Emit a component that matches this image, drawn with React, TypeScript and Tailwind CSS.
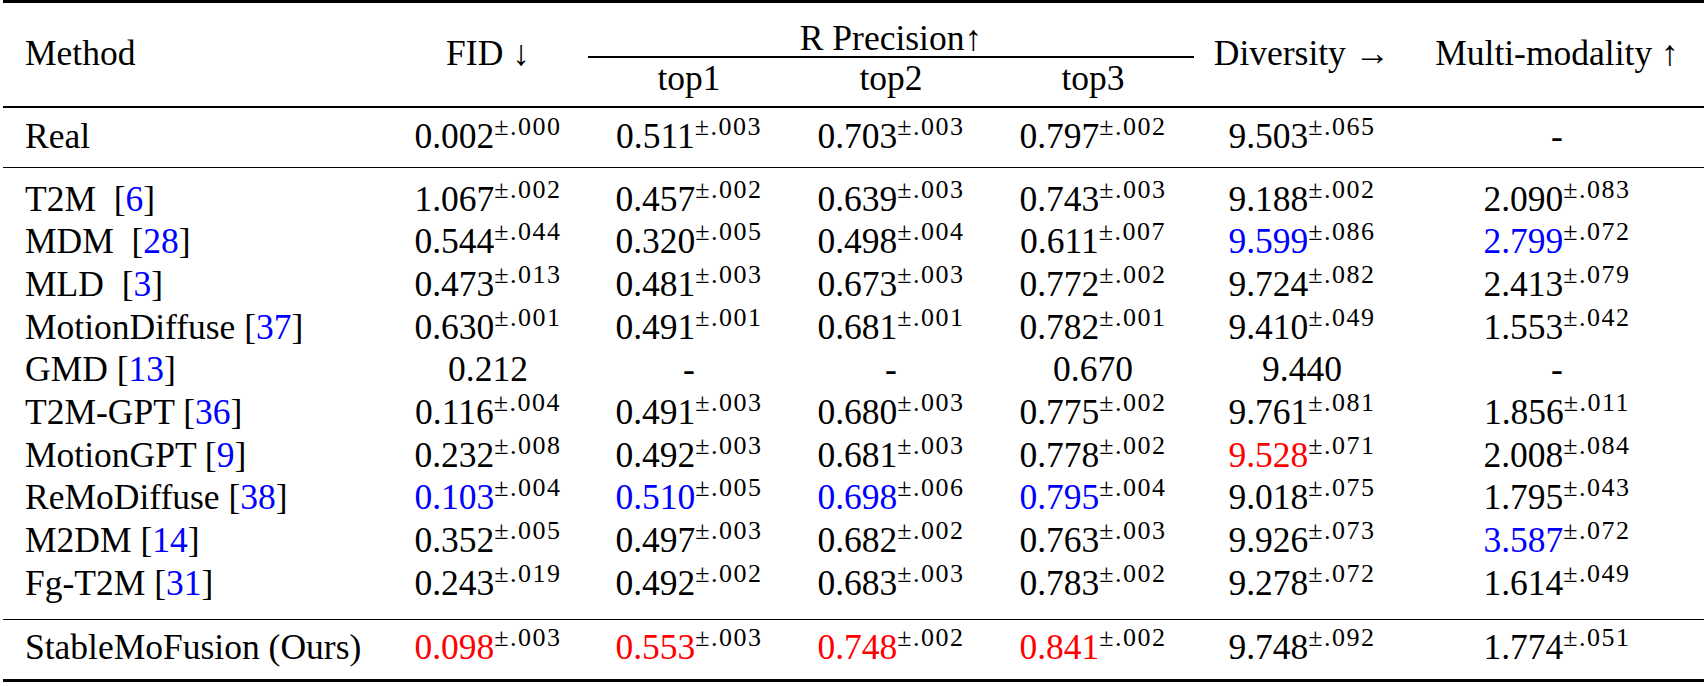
import React from "react";

type Cell = [string, string?, ("b" | "r")?];

type Row = { name: string; ref?: string; wide?: boolean; cells: Cell[] };

const cols = "grid grid-cols-[385px_200px_202px_202px_202px_216px_294px]";

const real: Cell[] = [
    ["0.002", ".000"], ["0.511", ".003"], ["0.703", ".003"], ["0.797", ".002"], ["9.503", ".065"], ["-"],
];

const rows: Row[] = [
    { name: "T2M", ref: "6", wide: true, cells: [["1.067", ".002"], ["0.457", ".002"], ["0.639", ".003"], ["0.743", ".003"], ["9.188", ".002"], ["2.090", ".083"]] },
    { name: "MDM", ref: "28", wide: true, cells: [["0.544", ".044"], ["0.320", ".005"], ["0.498", ".004"], ["0.611", ".007"], ["9.599", ".086", "b"], ["2.799", ".072", "b"]] },
    { name: "MLD", ref: "3", wide: true, cells: [["0.473", ".013"], ["0.481", ".003"], ["0.673", ".003"], ["0.772", ".002"], ["9.724", ".082"], ["2.413", ".079"]] },
    { name: "MotionDiffuse", ref: "37", cells: [["0.630", ".001"], ["0.491", ".001"], ["0.681", ".001"], ["0.782", ".001"], ["9.410", ".049"], ["1.553", ".042"]] },
    { name: "GMD", ref: "13", cells: [["0.212"], ["-"], ["-"], ["0.670"], ["9.440"], ["-"]] },
    { name: "T2M-GPT", ref: "36", cells: [["0.116", ".004"], ["0.491", ".003"], ["0.680", ".003"], ["0.775", ".002"], ["9.761", ".081"], ["1.856", ".011"]] },
    { name: "MotionGPT", ref: "9", cells: [["0.232", ".008"], ["0.492", ".003"], ["0.681", ".003"], ["0.778", ".002"], ["9.528", ".071", "r"], ["2.008", ".084"]] },
    { name: "ReMoDiffuse", ref: "38", cells: [["0.103", ".004", "b"], ["0.510", ".005", "b"], ["0.698", ".006", "b"], ["0.795", ".004", "b"], ["9.018", ".075"], ["1.795", ".043"]] },
    { name: "M2DM", ref: "14", cells: [["0.352", ".005"], ["0.497", ".003"], ["0.682", ".002"], ["0.763", ".003"], ["9.926", ".073"], ["3.587", ".072", "b"]] },
    { name: "Fg-T2M", ref: "31", cells: [["0.243", ".019"], ["0.492", ".002"], ["0.683", ".003"], ["0.783", ".002"], ["9.278", ".072"], ["1.614", ".049"]] },
];

const ours: Cell[] = [
    ["0.098", ".003", "r"], ["0.553", ".003", "r"], ["0.748", ".002", "r"], ["0.841", ".002", "r"], ["9.748", ".092"], ["1.774", ".051"],
];

function Value({ cell }: { cell: Cell }) {
    const [num, pm, color] = cell;
    const tone = color === "b" ? "text-[#0000ff]" : color === "r" ? "text-[#ff0000]" : "text-black";
    return (
        <div className="text-center whitespace-nowrap">
            <span className={ tone }>{ num }</span>
            { pm && <span className="relative -top-[13px] text-[26px] tracking-[1.5px]">±{ pm }</span> }
        </div>
    );
}

function DataRow({ name, refNo, wide, cells }: { name: string; refNo?: string; wide?: boolean; cells: Cell[] }) {
    return (
        <div className={ `${ cols } h-[42.7px] leading-[42.7px]` }>
            <div className="pl-[22px] whitespace-pre">
                { name }
                { refNo && (
                    <>
                        { wide ? "  [" : " [" }
                        <span className="text-[#0000ff]">{ refNo }</span>]
                    </>
                ) }
            </div>
            { cells.map((c, i) => <Value key={ i } cell={ c } />) }
        </div>
    );
}

export default function App() {
    return (
        <div className="w-[1707px] h-[686px] bg-white text-black font-['Liberation_Serif',serif] text-[35.5px]">
            <div className="ml-[3px] w-[1701px] flex flex-col">
                <div className="h-[3px] bg-black" />

                {/* header */ }
                <div className={ `${ cols } h-[103px] leading-[32px]` }>
                    <div className="pl-[22px] pt-[34px]">Method</div>
                    <div className="pt-[34px] text-center">FID ↓</div>
                    <div className="col-span-3 flex flex-col">
                        <div className="pt-[19px] h-[53px] text-center">R Precision↑</div>
                        <div className="h-[1.5px] bg-black" />
                        <div className="mt-[4px] grid grid-cols-3 text-center">
                            <div>top1</div>
                            <div>top2</div>
                            <div>top3</div>
                        </div>
                    </div>
                    <div className="pt-[34px] text-center">Diversity →</div>
                    <div className="pt-[34px] text-center">Multi-modality ↑</div>
                </div>
                <div className="h-[1.5px] bg-black" />

                <div className="h-[7.2px]" />
                <DataRow name="Real" cells={ real } />
                <div className="h-[9.6px]" />
                <div className="h-[1.5px] bg-black" />

                <div className="h-[9.2px]" />
                { rows.map((r) => (
                    <DataRow key={ r.name } name={ r.name } refNo={ r.ref } wide={ r.wide } cells={ r.cells } />
                )) }
                <div className="h-[14.3px]" />
                <div className="h-[1.5px] bg-black" />

                <div className="h-[5.2px]" />
                <DataRow name="StableMoFusion (Ours)" cells={ ours } />
                <div className="h-[10.6px]" />
                <div className="h-[3.5px] bg-black" />
            </div>
        </div>
    );
}
